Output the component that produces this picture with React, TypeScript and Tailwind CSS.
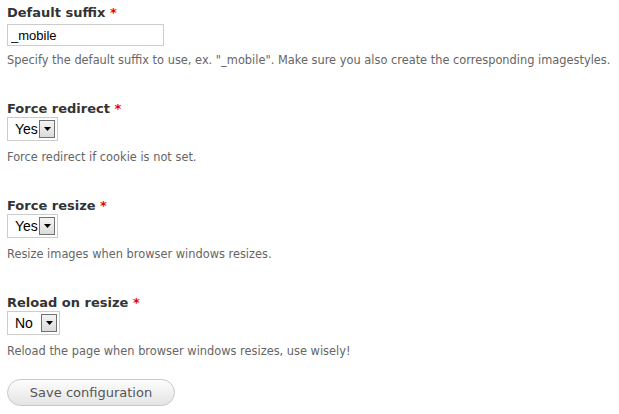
import React from "react";

const FIELDS = [
  { label: "Force redirect", value: "Yes", desc: "Force redirect if cookie is not set." },
  { label: "Force resize", value: "Yes", desc: "Resize images when browser windows resizes." },
  { label: "Reload on resize", value: "No", desc: "Reload the page when browser windows resizes, use wisely!" },
];

function Label({ text }: { text: string }) {
  return (
    <label className="block text-[13px] font-bold leading-[18px] text-[#333]">
      {text} <span className="text-[#e00]">*</span>
    </label>
  );
}

function SelectBox({ value }: { value: string }) {
  const wide = value === "No";
  return (
    <div
      className={
        "-mt-[1px] flex h-[24px] items-center border border-[#ccc] bg-white pl-[7px] pr-[2px] " +
        (wide ? "w-[53px]" : "w-[51px]")
      }
    >
      <span className="flex-1 text-[14px] text-black [font-family:'Liberation_Sans',Arial,sans-serif]">{value}</span>
      <span className="flex h-[18px] w-[16px] items-center justify-center border border-[#707070] bg-gradient-to-b from-[#f4f4f4] to-[#dcdcdc]">
        <svg width="7" height="4" viewBox="0 0 7 4">
          <path d="M0 0h7L3.5 4z" fill="#000" />
        </svg>
      </span>
    </div>
  );
}

export default function App() {
  return (
    <div className="min-h-screen bg-white px-[7px] pt-[4px] [font-family:'DejaVu_Sans',Verdana,sans-serif]">
      <div className="mb-[32px]">
        <Label text="Default suffix" />
        <input
          readOnly
          value="_mobile"
          className="mt-[2px] block h-[22px] w-[157px] border border-[#ccc] px-[3px] text-[13px] text-black outline-none [font-family:'Liberation_Sans',Arial,sans-serif]"
        />
        <p className="mt-[6px] text-[11.4px] leading-[16px] text-[#666]">
          Specify the default suffix to use, ex. "_mobile". Make sure you also create the corresponding imagestyles.
        </p>
      </div>
      {FIELDS.map((f, i) => (
        <div key={f.label} className={i === FIELDS.length - 1 ? "mb-[20px]" : "mb-[32px]"}>
          <Label text={f.label} />
          <SelectBox value={f.value} />
          <p className="mt-[8px] text-[11.4px] leading-[16px] text-[#666]">{f.desc}</p>
        </div>
      ))}
      <button className="h-[27px] w-[168px] rounded-full border border-[#c8c8c8] bg-gradient-to-b from-[#fdfdfd] to-[#e4e4e4] text-[13px] text-[#555]">
        Save configuration
      </button>
    </div>
  );
}
